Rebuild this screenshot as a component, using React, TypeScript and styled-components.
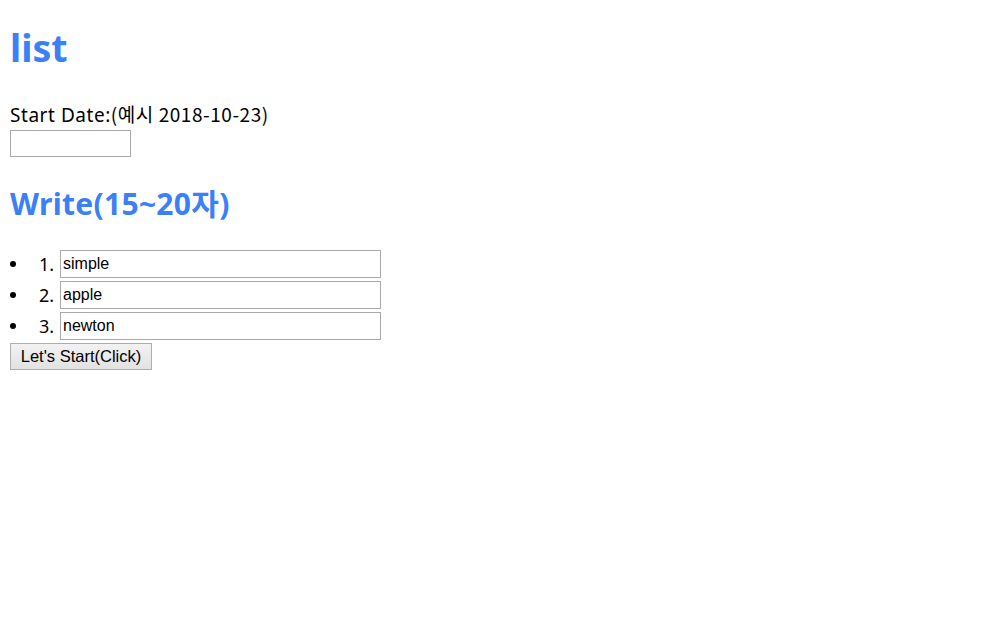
import styled, { createGlobalStyle } from 'styled-components';

const GlobalStyle = createGlobalStyle`
  html, body {
    margin: 0;
    padding: 0;
    background: #ffffff;
  }
  body {
    font-family: "Noto Sans", "Noto Sans CJK KR", sans-serif;
    color: #000000;
  }
`;

const words = ['simple', 'apple', 'newton'];

export default function App() {
  return (
    <>
      <GlobalStyle />
      <Page>
        <Title>list</Title>
        <DateLabel>
          Start Date:<Hint>(예시 2018-10-23)</Hint>
        </DateLabel>
        <DateInput type="text" />
        <SubTitle>Write(15~20자)</SubTitle>
        <WordList>
          {words.map((word, i) => (
            <WordRow key={word}>
              <Bullet />
              <Number>{`${i + 1}.`}</Number>
              <WordInput type="text" defaultValue={word} />
            </WordRow>
          ))}
        </WordList>
        <StartButton type="button">Let's Start(Click)</StartButton>
      </Page>
    </>
  );
}

const Page = styled.div`
  display: flex;
  flex-direction: column;
  align-items: flex-start;
  padding: 0 10px;
`;

const Title = styled.h1`
  margin: 20px 0 0;
  font-family: "Noto Sans", "Noto Sans CJK KR", sans-serif;
  font-weight: 700;
  font-size: 37.5px;
  line-height: 56px;
  height: 56px;
  color: #3b80f6;
`;

const DateLabel = styled.div`
  margin-top: 26px;
  font-size: 19px;
  line-height: 24px;
  height: 24px;
  letter-spacing: 0.55px;
`;

const Hint = styled.span`
  font-family: "Noto Sans CJK KR", "Noto Sans", sans-serif;
`;

const DateInput = styled.input`
  box-sizing: border-box;
  margin: 4px 0 0;
  width: 121px;
  height: 27px;
  padding: 0 2px;
  border: 1px solid #a9a9a9;
  font-family: "Liberation Sans", Arial, sans-serif;
  font-size: 16px;
  outline: none;
`;

const SubTitle = styled.h2`
  margin: 29px 0 0;
  font-family: "Noto Sans", "Noto Sans CJK KR", sans-serif;
  font-weight: 700;
  font-size: 30px;
  line-height: 36px;
  height: 36px;
  letter-spacing: 0.3px;
  color: #3b80f6;
`;

const WordList = styled.ul`
  display: flex;
  flex-direction: column;
  gap: 3px;
  margin: 28px 0 0;
  padding: 0;
  list-style: none;
`;

const WordRow = styled.li`
  display: flex;
  align-items: center;
  height: 28px;
`;

const Bullet = styled.span`
  width: 6px;
  height: 6px;
  border-radius: 50%;
  background: #000000;
`;

const Number = styled.span`
  width: 44px;
  padding-right: 6px;
  box-sizing: border-box;
  text-align: right;
  font-size: 18px;
  line-height: 28px;
`;

const WordInput = styled.input`
  box-sizing: border-box;
  width: 321px;
  height: 28px;
  margin: 0;
  padding: 0 2px;
  border: 1px solid #a9a9a9;
  font-family: "Liberation Sans", Arial, sans-serif;
  font-size: 16px;
  color: #000000;
  outline: none;
`;

const StartButton = styled.button`
  box-sizing: border-box;
  margin-top: 3px;
  width: 142px;
  height: 27px;
  padding: 0;
  border: 1px solid #adadad;
  border-radius: 0;
  background: linear-gradient(#f2f2f2, #e2e2e2);
  font-family: "Liberation Sans", Arial, sans-serif;
  font-size: 16.5px;
  color: #000000;
  cursor: pointer;
`;
